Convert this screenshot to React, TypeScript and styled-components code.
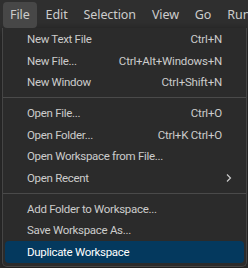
import { createGlobalStyle, styled } from "styled-components";

const GlobalStyle = createGlobalStyle`
  html, body {
    margin: 0;
    padding: 0;
    background: #2f2f2f;
    overflow: hidden;
  }
  body {
    font-family: Roboto, "Noto Sans", sans-serif;
    font-size: 12px;
    color: #cccccc;
  }
`;

const Window = styled.div`
  width: 248px;
  height: 268px;
  background: #2f2f2f;
  overflow: hidden;
`;

const MenuBar = styled.div`
  display: flex;
  align-items: center;
  height: 29px;
  padding-left: 3px;
  white-space: nowrap;
`;

const MenuBarItem = styled.div<{ $active?: boolean }>`
  display: flex;
  align-items: center;
  flex-shrink: 0;
  height: 26px;
  padding: 0 7px;
  margin-right: 2px;
  border-radius: 4px;
  background: ${(p) => (p.$active ? "#474747" : "transparent")};
  color: #cccccc;
  font-family: "Noto Sans", sans-serif;
  font-size: 12.5px;
  letter-spacing: -0.1px;
`;

const Menu = styled.div`
  margin-left: 2px;
  margin-top: -1px;
  padding: 0 2px 3px 2px;
  box-sizing: border-box;
  width: 245px;
  background: #2b2b2b;
  border: 1px solid #454545;
  border-top: none;
  border-radius: 0 0 5px 5px;
  box-shadow: 0 2px 8px rgba(0, 0, 0, 0.5);
`;

const Item = styled.div<{ $selected?: boolean }>`
  display: flex;
  align-items: center;
  justify-content: space-between;
  position: relative;
  height: 21.7px;
  padding: 0 22px;
  border-radius: 4px;
  background: ${(p) => (p.$selected ? "#04395e" : "transparent")};
  color: ${(p) => (p.$selected ? "#ffffff" : "#cccccc")};
  font-size: 11.5px;
  letter-spacing: -0.3px;
  white-space: nowrap;
`;

const Shortcut = styled.span`
  color: #cccccc;
  letter-spacing: -0.2px;
`;

const Chevron = styled.svg`
  position: absolute;
  right: 12px;
  top: 50%;
  margin-top: -4px;
`;

const Separator = styled.div`
  height: 1px;
  margin: 4px -2px;
  background: #4a4a4a;
`;

type Entry = { label: string; key?: string; sub?: boolean; selected?: boolean } | "sep";

const entries: Entry[] = [
  { label: "New Text File", key: "Ctrl+N" },
  { label: "New File...", key: "Ctrl+Alt+Windows+N" },
  { label: "New Window", key: "Ctrl+Shift+N" },
  "sep",
  { label: "Open File...", key: "Ctrl+O" },
  { label: "Open Folder...", key: "Ctrl+K Ctrl+O" },
  { label: "Open Workspace from File..." },
  { label: "Open Recent", sub: true },
  "sep",
  { label: "Add Folder to Workspace..." },
  { label: "Save Workspace As..." },
  { label: "Duplicate Workspace", selected: true },
];

const topItems = ["File", "Edit", "Selection", "View", "Go", "Run"];

export default function App() {
  return (
    <Window>
      <GlobalStyle />
      <MenuBar>
        {topItems.map((t, i) => (
          <MenuBarItem key={t} $active={i === 0}>
            {t}
          </MenuBarItem>
        ))}
      </MenuBar>
      <Menu>
        {entries.map((e, i) =>
          e === "sep" ? (
            <Separator key={i} />
          ) : (
            <Item key={i} $selected={e.selected}>
              <span>{e.label}</span>
              {e.key && <Shortcut>{e.key}</Shortcut>}
              {e.sub && (
                <Chevron width="6" height="8" viewBox="0 0 6 8">
                  <path d="M1 0.5 L4.5 4 L1 7.5" fill="none" stroke="#cccccc" strokeWidth="1.2" />
                </Chevron>
              )}
            </Item>
          )
        )}
      </Menu>
    </Window>
  );
}
